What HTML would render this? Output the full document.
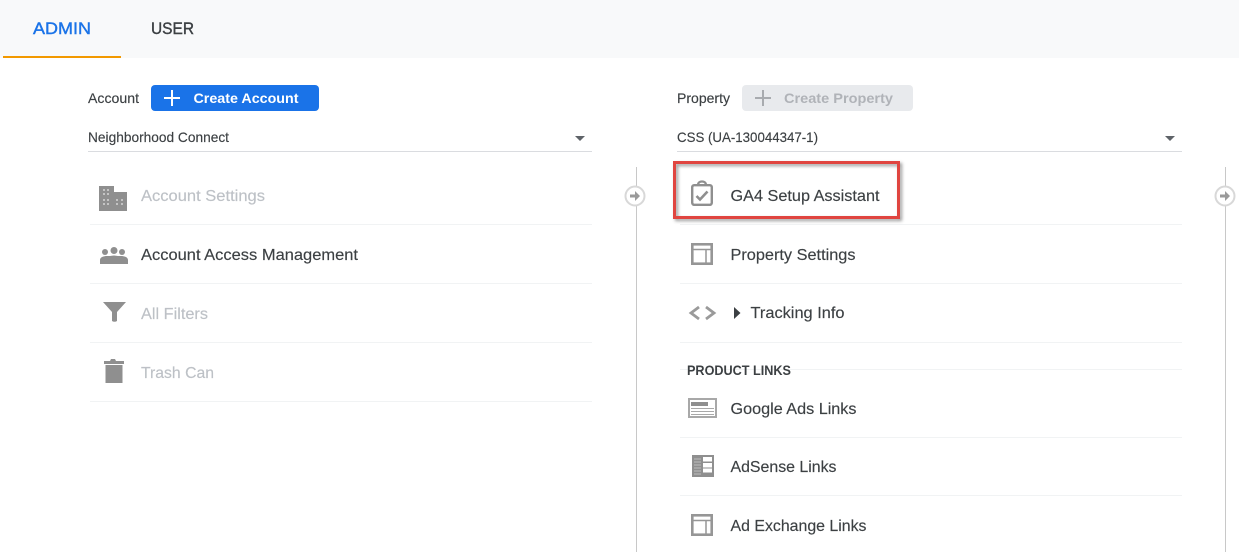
<!DOCTYPE html>
<html><head><meta charset="utf-8"><style>
html,body{margin:0;padding:0;background:#fff;width:1239px;height:552px;overflow:hidden}
svg{display:block}
text{font-family:"Liberation Sans",Arial,sans-serif;font-size:16px;fill:#3c4043;stroke:#3c4043;stroke-width:.15px}
.s{font-size:14px}
.d{fill:#bdc1c6;stroke:#bdc1c6}
</style></head><body>
<svg width="1239" height="552" viewBox="0 0 1239 552" xmlns="http://www.w3.org/2000/svg">
<defs>
<filter id="sh" x="-10%" y="-20%" width="120%" height="140%"><feDropShadow dx="2" dy="2" stdDeviation="1.5" flood-color="#000" flood-opacity=".4"/></filter>
<filter id="b" x="-10%" y="-10%" width="120%" height="120%"><feGaussianBlur stdDeviation=".35"/></filter>
</defs>
<rect width="1239" height="58" fill="#f8f9fa"/>
<rect x="3" y="56" width="118" height="2" fill="#f29900"/>
<text x="33" y="34" style="font-size:17px;fill:#1a73e8;stroke:#1a73e8;stroke-width:.4px" textLength="58" lengthAdjust="spacingAndGlyphs">ADMIN</text>
<text x="151" y="34" style="font-size:17px;stroke-width:.4px" textLength="43" lengthAdjust="spacingAndGlyphs">USER</text>

<text class="s" x="88" y="103" textLength="51" lengthAdjust="spacingAndGlyphs">Account</text>
<rect x="151" y="85" width="168" height="26" rx="4" fill="#1a73e8"/>
<path d="M172 90v16M164 98h16" stroke="#fff" stroke-width="2"/>
<text class="s" x="193.500" y="103" style="fill:#fff;stroke:#fff;stroke-width:0;font-weight:700" textLength="105" lengthAdjust="spacingAndGlyphs">Create Account</text>
<text class="s" x="88" y="142" textLength="141" lengthAdjust="spacingAndGlyphs">Neighborhood Connect</text>
<rect x="88" y="151" width="504" height="1" fill="#dadce0"/>
<path d="M575 136h10l-5 5z" fill="#5f6368"/>

<g fill="#f1f3f4">
<rect x="90" y="224" width="502" height="1"/><rect x="90" y="283" width="502" height="1"/><rect x="90" y="342" width="502" height="1"/><rect x="90" y="401" width="502" height="1"/>
<rect x="680" y="224" width="502" height="1"/><rect x="680" y="283" width="502" height="1"/><rect x="680" y="342" width="502" height="1"/><rect x="680" y="437" width="502" height="1"/><rect x="680" y="495" width="502" height="1"/>
<rect x="680" y="369" width="502" height="1"/>
</g>

<text class="d" x="141" y="201" textLength="124" lengthAdjust="spacingAndGlyphs">Account Settings</text>
<text x="141" y="260" textLength="217" lengthAdjust="spacingAndGlyphs">Account Access Management</text>
<text class="d" x="141" y="319" textLength="67" lengthAdjust="spacingAndGlyphs">All Filters</text>
<text class="d" x="141" y="378" textLength="73" lengthAdjust="spacingAndGlyphs">Trash Can</text>

<g filter="url(#b)">
<!-- building -->
<path d="M99 186h15v6h13v19H99z" fill="#8f8f8f"/>
<g fill="#c4c4c4"><rect x="103" y="189" width="2" height="2"/><rect x="107" y="189" width="2" height="2"/><rect x="103" y="193" width="2" height="2"/><rect x="107" y="193" width="2" height="2"/><rect x="103" y="199" width="2" height="2"/><rect x="107" y="199" width="2" height="2"/><rect x="103" y="203" width="2" height="2"/><rect x="107" y="203" width="2" height="2"/><rect x="116" y="199" width="2" height="2"/><rect x="121" y="199" width="2" height="2"/><rect x="116" y="203" width="2" height="2"/><rect x="121" y="203" width="2" height="2"/></g>
<!-- people -->
<g fill="#8f8f8f"><circle cx="105" cy="252" r="3"/><circle cx="114" cy="250.500" r="3.500"/><circle cx="122" cy="252" r="3"/><path d="M100 264v-4c0-3 4-4 7-4 2 0 4 0 7-.5 3 .5 5 .5 7 .5 3 0 7 1 7 4v4z"/></g>
<!-- filter -->
<path d="M103 302h23l-9 10v9q-2.500 1.500-5 0v-9z" fill="#8f8f8f"/>
<!-- trash -->
<path d="M104 361h6l1-2h4l1 2h8v3h-20z M105.500 365h17v18h-17z" fill="#8f8f8f"/>
<!-- clipboard -->
<rect x="692.200" y="185.200" width="19.600" height="19.600" rx="2" fill="none" stroke="#8f8f8f" stroke-width="2.400"/>
<path d="M698 185c0-2.500 2-3.500 4-3.500s4 1 4 3.500" fill="none" stroke="#8f8f8f" stroke-width="2.200"/>
<path d="M696.500 196l3.500 3.500 7.500-8" fill="none" stroke="#8f8f8f" stroke-width="2.600"/>
<!-- property settings -->
<rect x="692.300" y="244.300" width="19.400" height="19.400" fill="none" stroke="#969696" stroke-width="2.600"/>
<path d="M692 249.500h20M706 249.500v14" fill="none" stroke="#969696" stroke-width="1.500"/>
<!-- tracking -->
<path d="M699 307l-8 6 8 6M706 307l8 6-8 6" fill="none" stroke="#9a9a9a" stroke-width="2.800"/>
<!-- ads -->
<rect x="689" y="399" width="27" height="18" fill="none" stroke="#a8a8a8" stroke-width="2"/>
<rect x="691" y="402" width="17" height="4" fill="#8f8f8f"/>
<path d="M691 408.500h23M691 411.500h23M691 414.500h23" stroke="#a8a8a8" stroke-width="1"/>
<!-- adsense -->
<rect x="692" y="455" width="22" height="22" fill="#8f8f8f"/>
<rect x="703" y="457" width="9" height="4.500" fill="#fff"/><rect x="703" y="463" width="9" height="4.500" fill="#fff"/><rect x="703" y="468.500" width="9" height="4" fill="#fff"/>
<path d="M694 459h7M694 462h7M694 465h7M694 468h7M694 471h7M694 474h7" stroke="#bdbdbd" stroke-width="1"/>
<!-- ad exchange -->
<rect x="692.300" y="515.300" width="19.400" height="19.400" fill="none" stroke="#969696" stroke-width="2.600"/>
<path d="M692 520.500h20M706 520.500v14" fill="none" stroke="#969696" stroke-width="1.500"/>
</g>

<!-- connectors -->
<rect x="636" y="167" width="1" height="385" fill="#c8c8c8"/>
<rect x="1225" y="167" width="1" height="385" fill="#c8c8c8"/>
<g>
<circle cx="635" cy="196" r="9.500" fill="#fff" stroke="#d8d8d8" stroke-width="2"/>
<path d="M630 194.500h5V191l5 5-5 5v-3.500h-5z" fill="#9a9a9a"/>
<circle cx="1225" cy="196" r="9.500" fill="#fff" stroke="#d8d8d8" stroke-width="2"/>
<path d="M1220 194.500h5V191l5 5-5 5v-3.500h-5z" fill="#9a9a9a"/>
</g>

<text class="s" x="677" y="103" textLength="53" lengthAdjust="spacingAndGlyphs">Property</text>
<rect x="742" y="85" width="171" height="26" rx="4" fill="#e8eaed"/>
<path d="M763 90v16M755 98h16" stroke="#a8abaf" stroke-width="2"/>
<text class="s" x="784" y="103" style="fill:#b0b3b8;stroke-width:0;font-weight:700" textLength="109" lengthAdjust="spacingAndGlyphs">Create Property</text>
<text class="s" x="677" y="142" textLength="141" lengthAdjust="spacingAndGlyphs">CSS (UA-130044347-1)</text>
<rect x="677" y="151" width="505" height="1" fill="#dadce0"/>
<path d="M1165 136h10l-5 5z" fill="#5f6368"/>

<rect x="674.500" y="162.500" width="224" height="55" fill="none" stroke="#e0453f" stroke-width="3" filter="url(#sh)"/>

<text x="730.500" y="201" textLength="149" lengthAdjust="spacingAndGlyphs">GA4 Setup Assistant</text>
<text x="730.500" y="260" textLength="125" lengthAdjust="spacingAndGlyphs">Property Settings</text>
<path d="M734 307l6.500 6-6.500 6z" fill="#3c4043"/>
<text x="750.500" y="318" textLength="94" lengthAdjust="spacingAndGlyphs">Tracking Info</text>

<rect x="684" y="362" width="108" height="7" fill="#fff"/>
<text x="687" y="375" style="font-size:14px;font-weight:700;stroke-width:0" textLength="104" lengthAdjust="spacingAndGlyphs">PRODUCT LINKS</text>

<text x="730.500" y="414" textLength="126" lengthAdjust="spacingAndGlyphs">Google Ads Links</text>
<text x="730.500" y="472" textLength="106" lengthAdjust="spacingAndGlyphs">AdSense Links</text>
<text x="730.500" y="531" textLength="136" lengthAdjust="spacingAndGlyphs">Ad Exchange Links</text>
</svg>
</body></html>
